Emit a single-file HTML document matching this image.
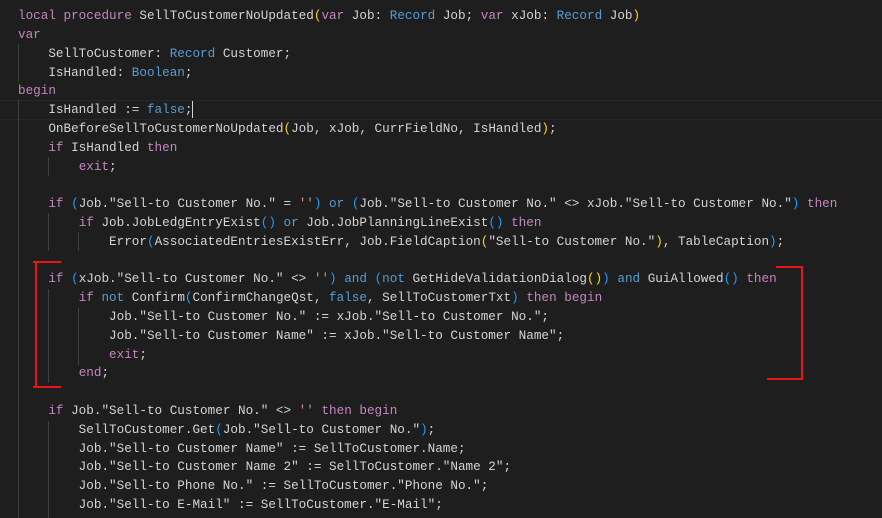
<!DOCTYPE html>
<html><head><meta charset="utf-8"><style>
html,body{margin:0;padding:0;background:#1e1e1e;width:882px;height:518px;overflow:hidden;position:relative}
.l{position:absolute;left:18px;height:18.8px;line-height:18.8px;font-family:"Liberation Mono",monospace;font-size:12.65px;color:#d4d4d4;white-space:pre}
.k{color:#c586c0}.b{color:#569cd6}.p{color:#179fff}.g{color:#ffd700}.s{color:#ce9178}
.gd{position:absolute;width:1px;background:#404040}
.r{position:absolute;background:#e8141a}
</style></head><body>
<div style="position:absolute;left:0;top:100px;width:882px;height:18px;border-top:1px solid #282828;border-bottom:1px solid #282828"></div>
<div class="gd" style="left:18px;top:44px;height:38px"></div>
<div class="gd" style="left:18px;top:100px;height:418px"></div>
<div class="gd" style="left:48px;top:157px;height:19px"></div>
<div class="gd" style="left:48px;top:213px;height:38px"></div>
<div class="gd" style="left:48px;top:289px;height:94px"></div>
<div class="gd" style="left:78px;top:232px;height:19px"></div>
<div class="gd" style="left:78px;top:308px;height:57px"></div>
<div class="gd" style="left:48px;top:421px;height:97px"></div>
<div id="c"></div>
<div style="position:absolute;left:192px;top:101px;width:1px;height:17px;background:#d4d4d4"></div>
<div class="r" style="left:33px;top:261px;width:28px;height:2px"></div>
<div class="r" style="left:35px;top:261px;width:2px;height:127px"></div>
<div class="r" style="left:33px;top:386px;width:28px;height:2px"></div>
<div class="r" style="left:776px;top:266px;width:27px;height:2px"></div>
<div class="r" style="left:801px;top:266px;width:2px;height:114px"></div>
<div class="r" style="left:767px;top:378px;width:36px;height:2px"></div>
<script>
var L=[
'<span class="k">local procedure</span> SellToCustomerNoUpdated<span class="g">(</span><span class="k">var</span> Job: <span class="b">Record</span> Job; <span class="k">var</span> xJob: <span class="b">Record</span> Job<span class="g">)</span>',
'<span class="k">var</span>',
'    SellToCustomer: <span class="b">Record</span> Customer;',
'    IsHandled: <span class="b">Boolean</span>;',
'<span class="k">begin</span>',
'    IsHandled := <span class="b">false</span>;',
'    OnBeforeSellToCustomerNoUpdated<span class="g">(</span>Job, xJob, CurrFieldNo, IsHandled<span class="g">)</span>;',
'    <span class="k">if</span> IsHandled <span class="k">then</span>',
'        <span class="k">exit</span>;',
'',
'    <span class="k">if</span> <span class="p">(</span>Job."Sell-to Customer No." = <span class="s">\'\'</span><span class="p">)</span> <span class="b">or</span> <span class="p">(</span>Job."Sell-to Customer No." &lt;&gt; xJob."Sell-to Customer No."<span class="p">)</span> <span class="k">then</span>',
'        <span class="k">if</span> Job.JobLedgEntryExist<span class="p">()</span> <span class="b">or</span> Job.JobPlanningLineExist<span class="p">()</span> <span class="k">then</span>',
'            Error<span class="p">(</span>AssociatedEntriesExistErr, Job.FieldCaption<span class="g">(</span>"Sell-to Customer No."<span class="g">)</span>, TableCaption<span class="p">)</span>;',
'',
'    <span class="k">if</span> <span class="p">(</span>xJob."Sell-to Customer No." &lt;&gt; <span class="s">\'\'</span><span class="p">)</span> <span class="b">and</span> <span class="p">(</span><span class="b">not</span> GetHideValidationDialog<span class="g">()</span><span class="p">)</span> <span class="b">and</span> GuiAllowed<span class="p">()</span> <span class="k">then</span>',
'        <span class="k">if</span> <span class="b">not</span> Confirm<span class="p">(</span>ConfirmChangeQst, <span class="b">false</span>, SellToCustomerTxt<span class="p">)</span> <span class="k">then begin</span>',
'            Job."Sell-to Customer No." := xJob."Sell-to Customer No.";',
'            Job."Sell-to Customer Name" := xJob."Sell-to Customer Name";',
'            <span class="k">exit</span>;',
'        <span class="k">end</span>;',
'',
'    <span class="k">if</span> Job."Sell-to Customer No." &lt;&gt; <span class="s">\'\'</span> <span class="k">then begin</span>',
'        SellToCustomer.Get<span class="p">(</span>Job."Sell-to Customer No."<span class="p">)</span>;',
'        Job."Sell-to Customer Name" := SellToCustomer.Name;',
'        Job."Sell-to Customer Name 2" := SellToCustomer."Name 2";',
'        Job."Sell-to Phone No." := SellToCustomer."Phone No.";',
'        Job."Sell-to E-Mail" := SellToCustomer."E-Mail";'
];
var h='';for(var i=0;i<L.length;i++){h+='<div class="l" style="top:'+(7.2+i*18.8).toFixed(1)+'px">'+L[i]+'</div>';}
document.getElementById('c').innerHTML=h;
</script>
</body></html>
